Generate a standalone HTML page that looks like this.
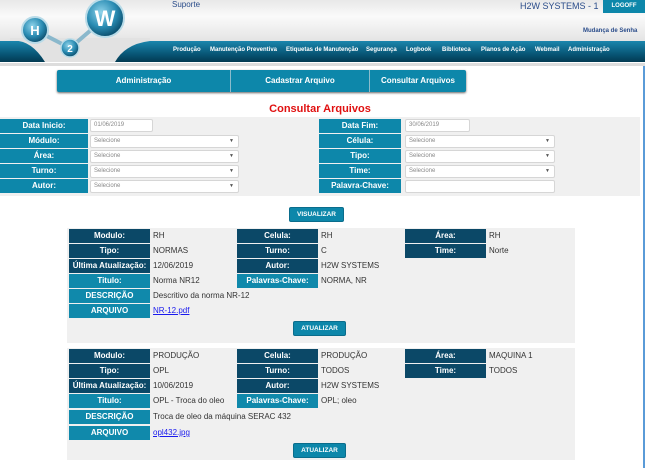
<!DOCTYPE html>
<html><head><meta charset="utf-8"><style>
*{margin:0;padding:0;box-sizing:border-box}
body{width:645px;height:468px;overflow:hidden;background:#fff;font-family:"Liberation Sans",sans-serif;position:relative}
.a{position:absolute}
.hdr{left:0;top:0;width:645px;height:41px;background:linear-gradient(#e8e8e8,#fafafa 40%,#e4e4e4)}
.nav{left:0;top:41px;width:645px;height:21px;background:linear-gradient(#1b86ad,#06506f 70%,#033a52)}
.nav span{position:absolute;top:6px;color:#fff;font-size:6px;font-weight:bold}
.lab{position:absolute;height:14px;color:#fff;font-size:8px;font-weight:bold;text-align:center;line-height:14px}
.lf{background:#0d87aa}
.dk{background:#0b4867}
.lt{background:#1089ab}
.inp{position:absolute;height:13px;background:#fff;border:1px solid #d6d6d6;border-radius:2px;font-size:6px;color:#888;line-height:11px;padding-left:3px}
.inp i{position:absolute;right:4px;top:0;font-style:normal;font-size:5px;color:#555}
.v{position:absolute;font-size:8px;color:#333;line-height:14px}
.btn{position:absolute;background:#0d87aa;color:#fff;font-size:6.5px;font-weight:bold;text-align:center;border-radius:2px;border:1px solid #0a6d8c}
</style></head><body>
<div class="a hdr"></div>
<div class="a nav">
<span style="left:173px">Produção</span><span style="left:210px">Manutenção Preventiva</span><span style="left:286px">Etiquetas de Manutenção</span><span style="left:366px">Segurança</span><span style="left:406px">Logbook</span><span style="left:442px">Biblioteca</span><span style="left:481px">Planos de Ação</span><span style="left:535px">Webmail</span><span style="left:568px">Administração</span>
</div>
<svg class="a" style="left:0;top:0" width="150" height="64" viewBox="0 0 150 64">
<defs><radialGradient id="g" cx="40%" cy="35%" r="65%"><stop offset="0" stop-color="#8fd3ea"/><stop offset=".6" stop-color="#2a8cb3"/><stop offset="1" stop-color="#0c4f6e"/></radialGradient></defs>
<path d="M10 41 Q30 38 45 62 L115 62 Q125 44 150 41 L150 38 L10 38Z" fill="#e2e2e2"/>
<line x1="35" y1="30" x2="70" y2="48" stroke="#8ab8cc" stroke-width="4"/>
<line x1="70" y1="48" x2="105" y2="18" stroke="#8ab8cc" stroke-width="4"/>
<circle cx="35" cy="30" r="13" fill="url(#g)" stroke="#b8dbe8" stroke-width="2"/>
<circle cx="70" cy="48" r="9" fill="url(#g)" stroke="#b8dbe8" stroke-width="1.5"/>
<circle cx="105" cy="18" r="19" fill="url(#g)" stroke="#b8dbe8" stroke-width="2"/>
<text x="35" y="35" fill="#fff" font-size="13" font-weight="bold" text-anchor="middle" font-family="Liberation Sans">H</text>
<text x="70" y="52" fill="#fff" font-size="10" font-weight="bold" text-anchor="middle" font-family="Liberation Sans">2</text>
<text x="105" y="26" fill="#fff" font-size="22" font-weight="bold" text-anchor="middle" font-family="Liberation Sans">W</text>
</svg>
<div class="a" style="left:172px;top:0;font-size:8px;color:#2a4c8a">Suporte</div>
<div class="a" style="left:520px;top:1px;font-size:9px;color:#2a4c8a;white-space:nowrap">H2W SYSTEMS - 1</div>
<div class="a" style="left:603px;top:0;width:42px;height:13px;background:#0d87aa;color:#fff;font-size:6px;font-weight:bold;text-align:center;line-height:13px">LOGOFF</div>
<div class="a" style="left:583px;top:28px;font-size:6px;font-weight:bold;color:#2a4c8a;white-space:nowrap">Mudança de Senha</div>
<div class="a" style="left:0;top:63px;width:645px;height:3px;background:#ddd"></div>
<div class="a" style="left:643px;top:66px;width:2px;height:402px;background:#5a9bd8"></div>
<div class="a" style="left:57px;top:70px;width:409px;height:22px;background:#0d87aa;border-radius:2px;box-shadow:0 1px 2px #666"></div>
<div class="a" style="left:230px;top:70px;width:1px;height:22px;background:#8bbccc"></div>
<div class="a" style="left:369px;top:70px;width:1px;height:22px;background:#8bbccc"></div>
<div class="a" style="left:57px;top:76px;width:173px;text-align:center;color:#fff;font-size:8px;font-weight:bold">Administração</div>
<div class="a" style="left:231px;top:76px;width:138px;text-align:center;color:#fff;font-size:8px;font-weight:bold">Cadastrar Arquivo</div>
<div class="a" style="left:370px;top:76px;width:96px;text-align:center;color:#fff;font-size:8px;font-weight:bold">Consultar Arquivos</div>
<div class="a" style="left:0;top:103px;width:640px;text-align:center;color:#e01010;font-size:11px;font-weight:bold">Consultar Arquivos</div>
<div class="a" style="left:0;top:117px;width:640px;height:79px;background:#f0f0f0"></div>
<div class="lab lf" style="left:0;top:119px;width:88px">Data Inicio:</div>
<div class="lab lf" style="left:0;top:134px;width:88px">Módulo:</div>
<div class="lab lf" style="left:0;top:149px;width:88px">Área:</div>
<div class="lab lf" style="left:0;top:164px;width:88px">Turno:</div>
<div class="lab lf" style="left:0;top:179px;width:88px">Autor:</div>
<div class="inp" style="left:90px;top:119px;width:63px">01/06/2019</div>
<div class="inp" style="left:90px;top:135px;width:149px">Selecione<i>▼</i></div>
<div class="inp" style="left:90px;top:150px;width:149px">Selecione<i>▼</i></div>
<div class="inp" style="left:90px;top:165px;width:149px">Selecione<i>▼</i></div>
<div class="inp" style="left:90px;top:180px;width:149px">Selecione<i>▼</i></div>
<div class="lab lf" style="left:319px;top:119px;width:82px">Data Fim:</div>
<div class="lab lf" style="left:319px;top:134px;width:82px">Célula:</div>
<div class="lab lf" style="left:319px;top:149px;width:82px">Tipo:</div>
<div class="lab lf" style="left:319px;top:164px;width:82px">Time:</div>
<div class="lab lf" style="left:319px;top:179px;width:82px">Palavra-Chave:</div>
<div class="inp" style="left:405px;top:119px;width:65px">30/06/2019</div>
<div class="inp" style="left:405px;top:135px;width:150px">Selecione<i>▼</i></div>
<div class="inp" style="left:405px;top:150px;width:150px">Selecione<i>▼</i></div>
<div class="inp" style="left:405px;top:165px;width:150px">Selecione<i>▼</i></div>
<div class="inp" style="left:405px;top:180px;width:150px"></div>
<div class="btn" style="left:289px;top:207px;width:55px;height:15px;line-height:13px">VISUALIZAR</div>

<div class="a" style="left:67px;top:228px;width:508px;height:115px;background:#f0f0f0"></div>
<div class="lab dk" style="left:69px;top:229px;width:81px">Modulo:</div><div class="v" style="left:153px;top:229px">RH</div>
<div class="lab dk" style="left:237px;top:229px;width:81px">Celula:</div><div class="v" style="left:321px;top:229px">RH</div>
<div class="lab dk" style="left:405px;top:229px;width:81px">Área:</div><div class="v" style="left:489px;top:229px">RH</div>
<div class="lab dk" style="left:69px;top:244px;width:81px">Tipo:</div><div class="v" style="left:153px;top:244px">NORMAS</div>
<div class="lab dk" style="left:237px;top:244px;width:81px">Turno:</div><div class="v" style="left:321px;top:244px">C</div>
<div class="lab dk" style="left:405px;top:244px;width:81px">Time:</div><div class="v" style="left:489px;top:244px">Norte</div>
<div class="lab dk" style="left:69px;top:259px;width:81px">Última Atualização:</div><div class="v" style="left:153px;top:259px">12/06/2019</div>
<div class="lab dk" style="left:237px;top:259px;width:81px">Autor:</div><div class="v" style="left:321px;top:259px">H2W SYSTEMS</div>
<div class="lab lt" style="left:69px;top:274px;width:81px">Titulo:</div><div class="v" style="left:153px;top:274px">Norma NR12</div>
<div class="lab lt" style="left:237px;top:274px;width:81px">Palavras-Chave:</div><div class="v" style="left:321px;top:274px">NORMA, NR</div>
<div class="lab lt" style="left:69px;top:289px;width:81px">DESCRIÇÃO</div><div class="v" style="left:153px;top:289px">Descritivo da norma NR-12</div>
<div class="lab lt" style="left:69px;top:304px;width:81px">ARQUIVO</div><div class="v" style="left:153px;top:304px;color:#1a1aee;text-decoration:underline">NR-12.pdf</div>
<div class="btn" style="left:293px;top:321px;width:53px;height:15px;line-height:13px">ATUALIZAR</div>

<div class="a" style="left:67px;top:348px;width:508px;height:112px;background:#f0f0f0"></div>
<div class="lab dk" style="left:69px;top:349px;width:81px">Modulo:</div><div class="v" style="left:153px;top:349px">PRODUÇÃO</div>
<div class="lab dk" style="left:237px;top:349px;width:81px">Celula:</div><div class="v" style="left:321px;top:349px">PRODUÇÃO</div>
<div class="lab dk" style="left:405px;top:349px;width:81px">Área:</div><div class="v" style="left:489px;top:349px">MAQUINA 1</div>
<div class="lab dk" style="left:69px;top:364px;width:81px">Tipo:</div><div class="v" style="left:153px;top:364px">OPL</div>
<div class="lab dk" style="left:237px;top:364px;width:81px">Turno:</div><div class="v" style="left:321px;top:364px">TODOS</div>
<div class="lab dk" style="left:405px;top:364px;width:81px">Time:</div><div class="v" style="left:489px;top:364px">TODOS</div>
<div class="lab dk" style="left:69px;top:379px;width:81px">Última Atualização:</div><div class="v" style="left:153px;top:379px">10/06/2019</div>
<div class="lab dk" style="left:237px;top:379px;width:81px">Autor:</div><div class="v" style="left:321px;top:379px">H2W SYSTEMS</div>
<div class="lab lt" style="left:69px;top:394px;width:81px">Titulo:</div><div class="v" style="left:153px;top:394px">OPL - Troca do oleo</div>
<div class="lab lt" style="left:237px;top:394px;width:81px">Palavras-Chave:</div><div class="v" style="left:321px;top:394px">OPL; oleo</div>
<div class="lab lt" style="left:69px;top:410px;width:81px">DESCRIÇÃO</div><div class="v" style="left:153px;top:410px">Troca de oleo da máquina SERAC 432</div>
<div class="lab lt" style="left:69px;top:426px;width:81px">ARQUIVO</div><div class="v" style="left:153px;top:426px;color:#1a1aee;text-decoration:underline">opl432.jpg</div>
<div class="btn" style="left:293px;top:443px;width:53px;height:15px;line-height:13px">ATUALIZAR</div>
</body></html>
